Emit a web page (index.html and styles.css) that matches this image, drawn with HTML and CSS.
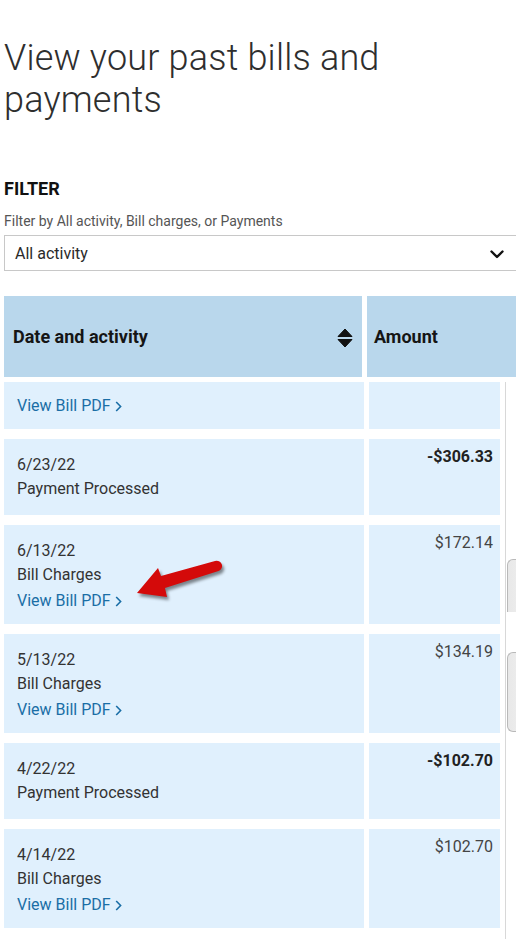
FILE: index.html
```html
<!DOCTYPE html>
<html lang="en">
<head>
<meta charset="utf-8">
<title>View your past bills and payments</title>
<link rel="stylesheet" href="styles.css">
</head>
<body>
<main class="page">
  <h1 class="title">View your past bills and payments</h1>

  <section class="filter">
    <h2 class="filter-label">FILTER</h2>
    <p class="filter-hint">Filter by All activity, Bill charges, or Payments</p>
    <div class="select">
      <span class="select-value">All activity</span>
      <svg class="select-chevron" width="14" height="9" viewBox="0 0 14 9" aria-hidden="true">
        <path d="M1.5 1.5 L7 7 L12.5 1.5" fill="none" stroke="#111" stroke-width="2.4" stroke-linecap="round" stroke-linejoin="round"/>
      </svg>
    </div>
  </section>

  <section class="table">
    <div class="thead">
      <div class="th th-date">
        <span>Date and activity</span>
        <svg class="sort-icon" width="16" height="20" viewBox="0 0 16 20" aria-hidden="true">
          <path d="M8 1 L15 8.5 L1 8.5 Z" fill="#111" stroke="#111" stroke-width="1" stroke-linejoin="round"/>
          <path d="M1 11.5 L15 11.5 L8 19 Z" fill="#111" stroke="#111" stroke-width="1" stroke-linejoin="round"/>
        </svg>
      </div>
      <div class="th th-amount">Amount</div>
    </div>

    <div class="tbody">
      <div class="rows">
        <div class="row row-first">
          <div class="cell cell-activity">
            <div class="date"></div>
            <div class="desc"></div>
            <a class="pdf-link" href="#">View Bill PDF<svg class="chev" width="7" height="11" viewBox="0 0 7 11" aria-hidden="true"><path d="M1.2 1 L5.6 5.5 L1.2 10" fill="none" stroke="currentColor" stroke-width="1.6"/></svg></a>
          </div>
          <div class="cell cell-amount"></div>
        </div>

        <div class="row">
          <div class="cell cell-activity">
            <div class="date">6/23/22</div>
            <div class="desc">Payment Processed</div>
          </div>
          <div class="cell cell-amount negative">-$306.33</div>
        </div>

        <div class="row">
          <div class="cell cell-activity">
            <div class="date">6/13/22</div>
            <div class="desc">Bill Charges</div>
            <a class="pdf-link" href="#">View Bill PDF<svg class="chev" width="7" height="11" viewBox="0 0 7 11" aria-hidden="true"><path d="M1.2 1 L5.6 5.5 L1.2 10" fill="none" stroke="currentColor" stroke-width="1.6"/></svg></a>
          </div>
          <div class="cell cell-amount">$172.14</div>
        </div>

        <div class="row">
          <div class="cell cell-activity">
            <div class="date">5/13/22</div>
            <div class="desc">Bill Charges</div>
            <a class="pdf-link" href="#">View Bill PDF<svg class="chev" width="7" height="11" viewBox="0 0 7 11" aria-hidden="true"><path d="M1.2 1 L5.6 5.5 L1.2 10" fill="none" stroke="currentColor" stroke-width="1.6"/></svg></a>
          </div>
          <div class="cell cell-amount">$134.19</div>
        </div>

        <div class="row">
          <div class="cell cell-activity">
            <div class="date">4/22/22</div>
            <div class="desc">Payment Processed</div>
          </div>
          <div class="cell cell-amount negative">-$102.70</div>
        </div>

        <div class="row">
          <div class="cell cell-activity">
            <div class="date">4/14/22</div>
            <div class="desc">Bill Charges</div>
            <a class="pdf-link" href="#">View Bill PDF<svg class="chev" width="7" height="11" viewBox="0 0 7 11" aria-hidden="true"><path d="M1.2 1 L5.6 5.5 L1.2 10" fill="none" stroke="currentColor" stroke-width="1.6"/></svg></a>
          </div>
          <div class="cell cell-amount">$102.70</div>
        </div>
      </div>

      <div class="scrollbar" aria-hidden="true">
        <div class="thumb thumb-top"></div>
        <div class="thumb thumb-bottom"></div>
      </div>
    </div>
  </section>

  <svg class="annotation-arrow" width="100" height="50" viewBox="0 0 100 50" aria-hidden="true">
    <path d="M7 38 L28 13 L31 21 L85 6 A5.2 5.2 0 0 1 88.5 16 L35 33 L37 42 Z" fill="#d40a0a"/>
  </svg>
</main>
</body>
</html>
```

FILE: styles.css
```css
html, body {
  margin: 0;
  padding: 0;
  background: #ffffff;
  overflow: hidden;
}

body {
  font-family: Roboto, "Noto Sans", "Liberation Sans", sans-serif;
  color: #333333;
}

.page {
  position: relative;
  width: 540px;
  padding: 37px 0 0 4px;
}

.title {
  margin: 0;
  max-width: 420px;
  font-size: 36px;
  line-height: 42px;
  font-weight: 300;
  color: #2e2e2e;
  letter-spacing: 0.2px;
}

.filter {
  margin-top: 58px;
}

.filter-label {
  margin: 0;
  font-size: 18px;
  line-height: 20px;
  font-weight: 700;
  color: #111111;
}

.filter-hint {
  margin: 14px 0 0 0;
  font-size: 14px;
  line-height: 17px;
  color: #555555;
}

.select {
  margin-top: 5px;
  height: 34px;
  width: 540px;
  border: 1px solid #c8c8c8;
  display: flex;
  align-items: center;
  padding-left: 10px;
  padding-right: 36px;
  box-sizing: content-box;
  position: relative;
}

.select-value {
  flex: 1;
  font-size: 16px;
  line-height: 19px;
  color: #2a2a2a;
}

.select-chevron {
  position: absolute;
  left: 485px;
  top: 14px;
}

.table {
  margin-top: 25px;
}

.thead {
  display: flex;
  gap: 5px;
  height: 81px;
}

.th {
  background: #b9d7ec;
  display: flex;
  align-items: center;
  font-size: 18px;
  font-weight: 700;
  color: #151515;
}

.th-date {
  width: 358px;
  padding: 0 9px 0 9px;
  box-sizing: border-box;
  justify-content: space-between;
}

.th-amount {
  flex: 1;
  padding-left: 7px;
}

.sort-icon {
  display: block;
  margin-top: 2px;
}

.tbody {
  margin-top: 5px;
  height: 560px;
  display: flex;
  gap: 5px;
  overflow: hidden;
}

.rows {
  width: 496px;
  display: flex;
  flex-direction: column;
  gap: 10px;
}

.row {
  display: flex;
  gap: 5px;
  flex: none;
}

.row-first {
  margin-top: -52px;
}

.cell {
  background: #e0f0fd;
}

.cell-activity {
  width: 360px;
  box-sizing: border-box;
  padding: 14px 13px 14px 13px;
  font-size: 16px;
  line-height: 24px;
  color: #333333;
}

.date,
.desc {
  height: 24px;
}

.pdf-link {
  display: flex;
  align-items: center;
  gap: 4px;
  height: 23px;
  line-height: 23px;
  padding-top: 2px;
  margin-bottom: -2px;
  color: #1a6ea6;
  text-decoration: none;
}

.chev {
  display: block;
  margin-top: 1px;
}

.cell-amount {
  width: 131px;
  box-sizing: border-box;
  padding: 6px 7px 0 0;
  text-align: right;
  font-size: 16px;
  line-height: 24px;
  color: #444444;
}

.cell-amount.negative {
  font-weight: 700;
  color: #222222;
}

.scrollbar {
  flex: 1;
  border-left: 1px solid #d8d8d8;
  display: flex;
  flex-direction: column;
  padding-left: 1px;
}

.thumb {
  background: linear-gradient(to right, #e8e8e8, #f7f7f7);
  border: 1px solid #b9b9b9;
  border-right: none;
}

.thumb-top {
  margin-top: 177px;
  height: 52px;
  border-radius: 6px 0 0 0;
  border-bottom: none;
}

.thumb-bottom {
  margin-top: 40px;
  height: 78px;
  border-radius: 6px 0 0 6px;
}

.annotation-arrow {
  position: absolute;
  left: 130px;
  top: 555px;
  filter: drop-shadow(2px 3px 1.5px rgba(0, 0, 0, 0.45));
}
```
